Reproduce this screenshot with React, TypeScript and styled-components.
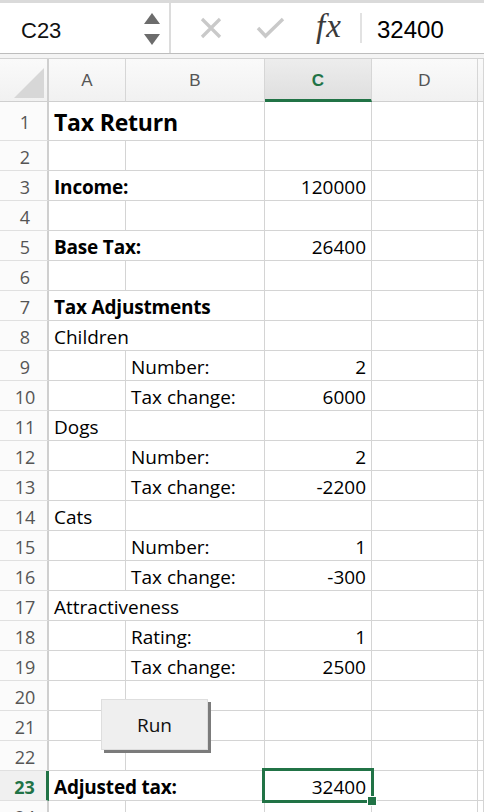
import React from "react";
import styled, { createGlobalStyle, css } from "styled-components";

const GREEN = "#217346";
const GRID = "#d4d4d4";

const GlobalStyle = createGlobalStyle`
  html, body {
    margin: 0;
    padding: 0;
    background: #fff;
    overflow: hidden;
  }
  body {
    font-family: "Open Sans", Lato, sans-serif;
  }
`;

const Window = styled.div`
  width: 484px;
  height: 812px;
  overflow: hidden;
  display: flex;
  flex-direction: column;
  & > * {
    flex-shrink: 0;
  }
`;

const TopStrip = styled.div`
  height: 3px;
  background: #dadada;
`;

const FormulaBar = styled.div`
  display: flex;
  align-items: center;
  height: 50px;
  border-bottom: 1px solid #bdbdbd;
  background: #fff;
`;

const NameBox = styled.div`
  display: flex;
  align-items: center;
  width: 171px;
  height: 100%;
  box-sizing: border-box;
  padding: 0 9px 0 21px;
  border-right: 2px solid #dcdcdc;
`;

const NameText = styled.span`
  font-family: "Liberation Sans", Arial, sans-serif;
  font-size: 22px;
  color: #111;
  padding-top: 5px;
`;

const Stepper = styled.div`
  margin-left: auto;
  display: flex;
  flex-direction: column;
  gap: 10px;
  padding-top: 1px;
`;

const ToolIcon = styled.div<{ $ml: number }>`
  display: flex;
  align-items: center;
  margin-left: ${(p) => p.$ml}px;
`;

const Fx = styled.span`
  display: inline-block;
  width: 30px;
  margin-left: 31px;
  font-family: "Liberation Serif", "DejaVu Serif", serif;
  font-style: italic;
  font-size: 33px;
  letter-spacing: 1px;
  color: #3a3a3a;
  line-height: 1;
  padding-bottom: 4px;
`;

const Divider = styled.div`
  width: 2px;
  height: 30px;
  margin-left: 14px;
  background: #e2e2e2;
`;

const FormulaValue = styled.span`
  margin-left: 15px;
  padding-top: 4px;
  font-family: "Liberation Sans", Arial, sans-serif;
  font-size: 24px;
  color: #000;
`;

const Spacer = styled.div`
  height: 4px;
  background: #f4f4f4;
  border-bottom: 1px solid #d2d2d2;
`;

const Sheet = styled.div`
  position: relative;
  display: grid;
  grid-template-columns: 49px 77px 139px 107px 106px 1fr;
  grid-template-rows: 43px 39px;
  grid-auto-rows: 30px;
`;

const Corner = styled.div`
  position: relative;
  box-sizing: border-box;
  border-right: 2px solid #cfcfcf;
  border-bottom: 1px solid #cfcfcf;
  background: linear-gradient(#fafafa, #f1f1f1);
  &::after {
    content: "";
    position: absolute;
    right: 3px;
    bottom: 3px;
    width: 30px;
    height: 30px;
    background: #d7d7d7;
    clip-path: polygon(100% 0, 100% 100%, 0 100%);
  }
`;

const ColHeader = styled.div<{ $active?: boolean }>`
  display: flex;
  align-items: center;
  justify-content: center;
  box-sizing: border-box;
  border-right: 1px solid #d6d6d6;
  border-bottom: 1px solid #cfcfcf;
  background: linear-gradient(#fafafa, #f1f1f1);
  font-family: "Liberation Sans", Arial, sans-serif;
  font-size: 17px;
  color: #555;
  padding-top: 2px;
  ${(p) =>
    p.$active &&
    css`
      background: linear-gradient(#ededed, #dfdfdf);
      border-bottom: 3px solid ${GREEN};
      color: ${GREEN};
      font-weight: bold;
      padding-top: 4px;
    `}
`;

const RowHeader = styled.div<{ $active?: boolean }>`
  display: flex;
  align-items: center;
  justify-content: center;
  box-sizing: border-box;
  border-right: 2px solid #cfcfcf;
  border-bottom: 1px solid #e0e0e0;
  background: #fbfbfb;
  font-size: 18px;
  color: #555;
  padding: 2px 0 0 3px;
  ${(p) =>
    p.$active &&
    css`
      border-right: 3px solid ${GREEN};
      color: ${GREEN};
      font-weight: bold;
      background: #f0f0f0;
    `}
`;

const Cell = styled.div<{
  $span?: boolean;
  $bold?: boolean;
  $title?: boolean;
  $right?: boolean;
  $selected?: boolean;
}>`
  position: relative;
  display: flex;
  align-items: center;
  justify-content: ${(p) => (p.$right ? "flex-end" : "flex-start")};
  box-sizing: border-box;
  padding: 2px ${(p) => (p.$right ? "5px" : "0")} 0
    ${(p) => (p.$right ? "0" : "5px")};
  grid-column: ${(p) => (p.$span ? "span 2" : "auto")};
  border-right: 1px solid ${GRID};
  border-bottom: 1px solid ${GRID};
  white-space: nowrap;
  font-size: ${(p) => (p.$title ? "23px" : "19px")};
  font-weight: ${(p) => (p.$bold || p.$title ? "bold" : "normal")};
  letter-spacing: ${(p) => (p.$bold || p.$title ? "-0.2px" : "0")};
  color: #000;
  ${(p) =>
    p.$selected &&
    css`
      z-index: 2;
      &::after {
        content: "";
        position: absolute;
        inset: -3px;
        border: 3px solid ${GREEN};
      }
      &::before {
        content: "";
        position: absolute;
        right: -6px;
        bottom: -6px;
        width: 8px;
        height: 8px;
        background: ${GREEN};
        border: 1px solid #fff;
        z-index: 3;
      }
    `}
`;

const RunButton = styled.button`
  position: absolute;
  left: 101px;
  top: 640px;
  width: 107px;
  height: 51px;
  box-sizing: border-box;
  border: 1px solid #dedede;
  border-radius: 0;
  background: #efefef;
  box-shadow: 3px 3px 0 #7b7b7b;
  font-family: "Open Sans", Lato, sans-serif;
  font-size: 19px;
  color: #111;
  padding: 0;
  z-index: 4;
`;

type Row = {
  a?: string;
  b?: string;
  c?: string;
  bold?: boolean;
  title?: boolean;
  span?: boolean;
};

const rows: Row[] = [
  { a: "Tax Return", title: true, span: true },
  {},
  { a: "Income:", c: "120000", bold: true, span: true },
  {},
  { a: "Base Tax:", c: "26400", bold: true, span: true },
  {},
  { a: "Tax Adjustments", bold: true, span: true },
  { a: "Children", span: true },
  { b: "Number:", c: "2" },
  { b: "Tax change:", c: "6000" },
  { a: "Dogs" },
  { b: "Number:", c: "2" },
  { b: "Tax change:", c: "-2200" },
  { a: "Cats" },
  { b: "Number:", c: "1" },
  { b: "Tax change:", c: "-300" },
  { a: "Attractiveness", span: true },
  { b: "Rating:", c: "1" },
  { b: "Tax change:", c: "2500" },
  {},
  {},
  {},
  { a: "Adjusted tax:", c: "32400", bold: true, span: true },
  {},
];

const SELECTED_ROW = 23;

const Arrow = ({ up }: { up?: boolean }) => (
  <svg width="16" height="11" viewBox="0 0 16 11">
    <polygon
      points={up ? "0,11 8,0 16,11" : "0,0 16,0 8,11"}
      fill="#6c6c6c"
    />
  </svg>
);

const App = () => {
  return (
    <Window>
      <GlobalStyle />
      <TopStrip />
      <FormulaBar>
        <NameBox>
          <NameText>C23</NameText>
          <Stepper>
            <Arrow up />
            <Arrow />
          </Stepper>
        </NameBox>
        <ToolIcon $ml={29}>
          <svg width="22" height="22" viewBox="0 0 22 22">
            <path
              d="M2 2 L20 20 M20 2 L2 20"
              stroke="#c9c9c9"
              strokeWidth="3.2"
              fill="none"
            />
          </svg>
        </ToolIcon>
        <ToolIcon $ml={34}>
          <svg width="29" height="22" viewBox="0 0 29 22">
            <polyline
              points="2,11 9.5,19 27,2"
              stroke="#c9c9c9"
              strokeWidth="3.4"
              fill="none"
            />
          </svg>
        </ToolIcon>
        <Fx>fx</Fx>
        <Divider />
        <FormulaValue>32400</FormulaValue>
      </FormulaBar>
      <Spacer />
      <Sheet>
        <Corner />
        <ColHeader>A</ColHeader>
        <ColHeader>B</ColHeader>
        <ColHeader $active>C</ColHeader>
        <ColHeader>D</ColHeader>
        <ColHeader />
        {rows.map((r, i) => {
          const n = i + 1;
          const active = n === SELECTED_ROW;
          return (
            <React.Fragment key={n}>
              <RowHeader $active={active}>{n}</RowHeader>
              {r.span ? (
                <Cell $span $bold={r.bold} $title={r.title}>
                  {r.a}
                </Cell>
              ) : (
                <>
                  <Cell $bold={r.bold}>{r.a}</Cell>
                  <Cell>{r.b}</Cell>
                </>
              )}
              <Cell $right $selected={active}>
                {r.c}
              </Cell>
              <Cell />
              <Cell />
            </React.Fragment>
          );
        })}
        <RunButton>Run</RunButton>
      </Sheet>
    </Window>
  );
};

export default App;
